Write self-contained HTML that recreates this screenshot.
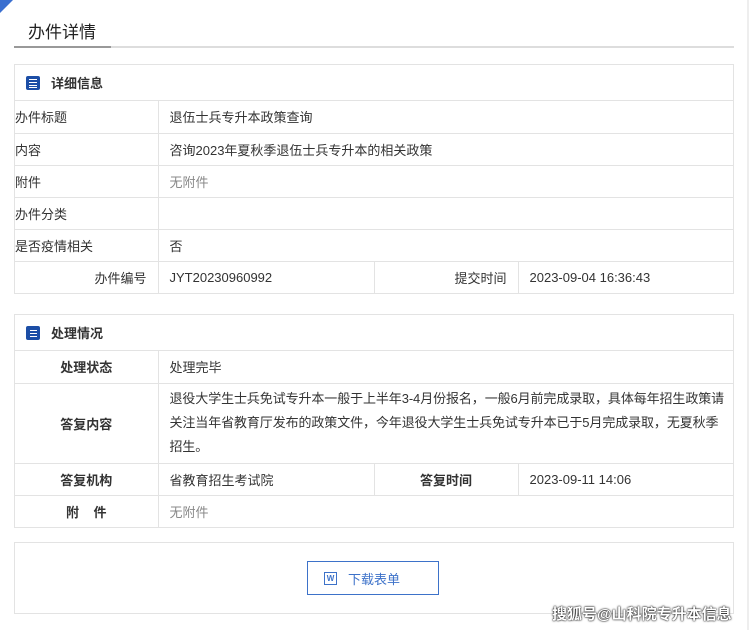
<!DOCTYPE html>
<html><head><meta charset="utf-8"><style>
*{margin:0;padding:0;box-sizing:border-box}
body{width:750px;height:630px;background:#fff;font-family:"Liberation Sans","Noto Sans CJK SC",sans-serif;font-size:13px;color:#333;position:relative;overflow:hidden}
.tri{position:absolute;left:0;top:0;width:0;height:0;border-top:13px solid #3a6fd0;border-right:13px solid transparent}
.vline{position:absolute;left:747px;top:0;width:2px;height:630px;background:#eee}
.tab{position:absolute;left:28px;top:18px;font-size:17px;color:#222}
.ul1{position:absolute;left:14px;top:46px;width:97px;height:2px;background:#999}
.ul2{position:absolute;left:111px;top:46px;width:623px;height:2px;background:#ddd}
.box{position:absolute;left:14px;width:720px;border:1px solid #e3e3e3}
.hd{height:36px;border-bottom:1px solid #e3e3e3;display:flex;align-items:center;padding-left:11px;font-weight:bold;font-size:13px;color:#333}
.ic{width:14px;height:14px;background:#1c4ea6;border-radius:2px;margin-right:11px;position:relative}
.ic i{position:absolute;left:3px;width:8px;height:1px;background:#fff}
table{border-collapse:collapse;width:100%}
td{border-top:1px solid #e3e3e3;border-left:1px solid #e3e3e3;height:32px;padding:0 11px;vertical-align:middle}
tr:first-child td{border-top:none}
td:first-child{border-left:none}
.l{width:143px;padding:0}
.b td.l{font-weight:bold;text-align:center}
.g{color:#888}
.r{text-align:right}
.btn{position:absolute;left:307px;top:561px;width:132px;height:34px;border:1px solid #3d72c9;color:#3d72c9;font-size:13px;display:flex;align-items:center;padding-left:16px}
.w{width:13px;height:13px;border:1px solid #3d72c9;font-size:8px;font-weight:bold;text-align:center;line-height:11px;margin-right:11px}
.wm{position:absolute;left:552px;top:603px;font-size:15px;font-weight:bold;color:#fff;text-shadow:0 0 2px #000,0 0 1px #000}
</style></head><body>
<div class="tri"></div><div class="vline"></div>
<div class="tab">办件详情</div><div class="ul1"></div><div class="ul2"></div>
<div class="box" style="top:64px">
<div class="hd"><div class="ic"><i style="top:3px"></i><i style="top:6px"></i><i style="top:9px"></i><i style="top:11px"></i></div>详细信息</div>
<table>
<tr><td class="l">办件标题</td><td colspan="3">退伍士兵专升本政策查询</td></tr>
<tr><td class="l">内容</td><td colspan="3">咨询2023年夏秋季退伍士兵专升本的相关政策</td></tr>
<tr><td class="l">附件</td><td colspan="3" class="g">无附件</td></tr>
<tr><td class="l">办件分类</td><td colspan="3"></td></tr>
<tr><td class="l">是否疫情相关</td><td colspan="3">否</td></tr>
<tr><td class="l r" style="padding-right:11px">办件编号</td><td style="width:216px">JYT20230960992</td><td class="r" style="width:144px">提交时间</td><td>2023-09-04 16:36:43</td></tr>
</table></div>
<div class="box" style="top:314px">
<div class="hd"><div class="ic"><i style="top:4px;left:4px;width:7px"></i><i style="top:7px;left:4px;width:7px"></i><i style="top:10px;left:4px;width:7px"></i></div>处理情况</div>
<table class="b">
<tr><td class="l">处理状态</td><td colspan="3">处理完毕</td></tr>
<tr><td class="l" style="height:80px">答复内容</td><td colspan="3" style="line-height:24px;padding-right:2px;letter-spacing:-0.1px">退役大学生士兵免试专升本一般于上半年3-4月份报名，一般6月前完成录取，具体每年招生政策请关注当年省教育厅发布的政策文件，今年退役大学生士兵免试专升本已于5月完成录取，无夏秋季招生。</td></tr>
<tr><td class="l">答复机构</td><td style="width:216px">省教育招生考试院</td><td style="width:144px;font-weight:bold;text-align:center">答复时间</td><td>2023-09-11 14:06</td></tr>
<tr><td class="l">附&nbsp;&nbsp;&nbsp;&nbsp;件</td><td colspan="3" class="g">无附件</td></tr>
</table></div>
<div class="box" style="top:542px;height:72px"></div>
<div class="btn"><div class="w">W</div>下载表单</div>
<div class="wm">搜狐号@山科院专升本信息</div>
</body></html>
